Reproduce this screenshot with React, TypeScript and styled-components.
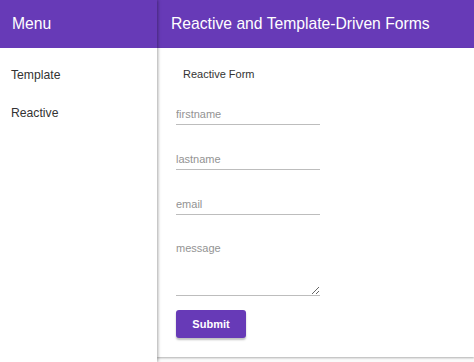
import styled, { createGlobalStyle } from 'styled-components';

const GlobalStyle = createGlobalStyle`
    html, body {
        margin: 0;
        padding: 0;
        height: 100%;
        background: #fafafa;
        font-family: 'Liberation Sans', Arial, sans-serif;
    }
    #root {
        height: 100%;
    }
`;

const PURPLE = '#673ab7';

const Layout = styled.div`
    display: flex;
    height: 100vh;
    overflow: hidden;
`;

const Sidenav = styled.aside`
    width: 157px;
    flex-shrink: 0;
    background: #fff;
    display: flex;
    flex-direction: column;
    position: relative;
    z-index: 2;
    box-shadow: 1px 0 3px rgba(0, 0, 0, 0.35);
`;

const Toolbar = styled.header<{ inset: number }>`
    height: 48px;
    flex-shrink: 0;
    background: ${PURPLE};
    color: #fff;
    display: flex;
    align-items: center;
    padding-left: ${({ inset }) => inset}px;
    font-size: 15.7px;
    box-sizing: border-box;
`;

const NavList = styled.nav`
    display: flex;
    flex-direction: column;
    padding-top: 8px;
`;

const NavItem = styled.a`
    height: 38px;
    display: flex;
    align-items: center;
    padding-left: 11px;
    font-size: 12.2px;
    color: #333;
    text-decoration: none;
    cursor: pointer;
`;

const Main = styled.main`
    flex: 1;
    display: flex;
    flex-direction: column;
    min-width: 0;
`;

const Card = styled.section`
    flex: 1;
    margin-bottom: 5px;
    background: #fff;
    box-shadow: 0 1px 2px rgba(0, 0, 0, 0.3);
    padding: 0 19px;
    display: flex;
    flex-direction: column;
`;

const CardTitle = styled.div`
    margin-top: 20px;
    padding-left: 7px;
    font-size: 11px;
    line-height: 13px;
    color: #333;
`;

const Form = styled.form`
    display: flex;
    flex-direction: column;
    align-items: flex-start;
    gap: 27px;
    margin-top: 26px;
`;

const fieldBase = `
    width: 144px;
    box-sizing: border-box;
    border: none;
    border-bottom: 1px solid #bdbdbd;
    background: transparent;
    font-family: 'Liberation Sans', Arial, sans-serif;
    font-size: 11px;
    line-height: 13px;
    padding: 0 0 4px;
    margin: 0;
    outline: none;
    color: #333;
    &::placeholder {
        color: #939393;
    }
`;

const Input = styled.input`
    ${fieldBase}
    height: 18px;
`;

const TextArea = styled.textarea`
    ${fieldBase}
    height: 54px;
    resize: vertical;
    display: block;
`;

const SubmitButton = styled.button`
    margin-top: -13px;
    width: 70px;
    height: 28px;
    border: none;
    border-radius: 3px;
    background: ${PURPLE};
    color: #fff;
    font-family: 'Liberation Sans', Arial, sans-serif;
    font-size: 11px;
    font-weight: bold;
    box-shadow: 0 2px 2px rgba(0, 0, 0, 0.25);
    cursor: pointer;
`;

export default function App() {
    return (
        <>
            <GlobalStyle />
            <Layout>
                <Sidenav>
                    <Toolbar inset={12}>Menu</Toolbar>
                    <NavList>
                        <NavItem>Template</NavItem>
                        <NavItem>Reactive</NavItem>
                    </NavList>
                </Sidenav>
                <Main>
                    <Toolbar inset={14}>Reactive and Template-Driven Forms</Toolbar>
                    <Card>
                        <CardTitle>Reactive Form</CardTitle>
                        <Form onSubmit={(e) => e.preventDefault()}>
                            <Input placeholder='firstname' />
                            <Input placeholder='lastname' />
                            <Input placeholder='email' />
                            <TextArea placeholder='message' />
                            <SubmitButton type='submit'>Submit</SubmitButton>
                        </Form>
                    </Card>
                </Main>
            </Layout>
        </>
    );
}
